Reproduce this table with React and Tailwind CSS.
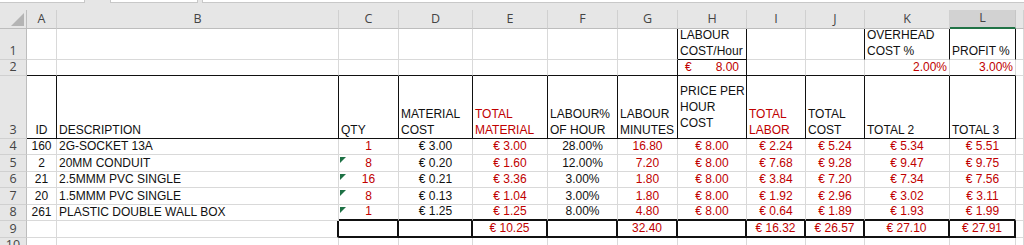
import React from "react";

const cellFont = "font-['Liberation_Sans',Arial,sans-serif] text-[12px]";

function box(v, sides = "trbl") {
  const b = { t: 0, r: 0, b: 0, l: 0 };
  for (const s of sides) b[s] = v;
  return b;
}

const N = 13; // A..M

function emptyRow() {
  return Array.from({ length: N }, () => ({ text: "", bd: { t: 0, r: 0, b: 0, l: 0 } }));
}

function buildRows() {
  const rows = [];
  const r1 = emptyRow();
  r1[7] = { text: "LABOUR\nCOST/Hour", al: "l", bd: box(1, "rl") };
  r1[10] = { text: "OVERHEAD\nCOST %", al: "l", bd: box(1, "rl") };
  r1[11] = { text: "PROFIT %", al: "l", bd: box(1, "rl") };
  rows.push(r1);
  const r2 = emptyRow();
  r2[7] = { acct: ["€", "8.00"], red: true, bd: box(1) };
  r2[10] = { text: "2.00%", al: "r", red: true, bd: box(0) };
  r2[11] = { text: "3.00%", al: "r", red: true, bd: box(0) };
  rows.push(r2);
  const h = [
    ["ID", "c"],
    ["DESCRIPTION", "l"],
    ["QTY", "l"],
    ["MATERIAL\nCOST", "l"],
    ["TOTAL\nMATERIAL", "l", true],
    ["LABOUR%\nOF HOUR", "l"],
    ["LABOUR\nMINUTES", "l"],
    ["PRICE PER\nHOUR\nCOST", "l", false, true],
    ["TOTAL\nLABOR", "l", true],
    ["TOTAL\nCOST", "l"],
    ["TOTAL 2", "l"],
    ["TOTAL 3", "l"],
  ];
  const r3 = emptyRow();
  h.forEach(([t, al, red, mid], i) => {
    r3[i] = { text: t, al, red, mid, bd: box(1) };
  });
  rows.push(r3);
  const data = [
    ["160", "2G-SOCKET 13A", "1", "€ 3.00", "€ 3.00", "28.00%", "16.80", "€ 8.00", "€ 2.24", "€ 5.24", "€ 5.34", "€ 5.51", false],
    ["2", "20MM CONDUIT", "8", "€ 0.20", "€ 1.60", "12.00%", "7.20", "€ 8.00", "€ 7.68", "€ 9.28", "€ 9.47", "€ 9.75", true],
    ["21", "2.5MMM PVC SINGLE", "16", "€ 0.21", "€ 3.36", "3.00%", "1.80", "€ 8.00", "€ 3.84", "€ 7.20", "€ 7.34", "€ 7.56", true],
    ["20", "1.5MMM PVC SINGLE", "8", "€ 0.13", "€ 1.04", "3.00%", "1.80", "€ 8.00", "€ 1.92", "€ 2.96", "€ 3.02", "€ 3.11", true],
    ["261", "PLASTIC DOUBLE WALL BOX", "1", "€ 1.25", "€ 1.25", "8.00%", "4.80", "€ 8.00", "€ 0.64", "€ 1.89", "€ 1.93", "€ 1.99", true],
  ];
  const redCols = [false, false, true, false, true, false, true, true, true, true, true, true];
  data.forEach((d) => {
    const r = emptyRow();
    for (let i = 0; i < 12; i++) {
      r[i] = {
        text: d[i],
        al: i === 1 ? "l" : "c",
        red: redCols[i],
        flag: i === 2 && d[12],
        bd: box(0),
      };
    }
    rows.push(r);
  });
  const r9 = emptyRow();
  const tot = { 4: "€ 10.25", 6: "32.40", 8: "€ 16.32", 9: "€ 26.57", 10: "€ 27.10", 11: "€ 27.91" };
  for (let i = 2; i < 12; i++) {
    r9[i] = { text: tot[i] || "", al: "c", red: true, bd: box(2) };
  }
  rows.push(r9);
  rows.push(emptyRow());
  return rows;
}

const rows = buildRows();

function rightCls(v) {
  if (v === 2) return "border-r-2 border-r-[#111]";
  if (v === 1) return "border-r border-r-[#111]";
  return "border-r border-r-[#d9d9d9]";
}
function bottomCls(v) {
  if (v === 2) return "border-b-2 border-b-[#111]";
  if (v === 1) return "border-b border-b-[#111]";
  return "border-b border-b-[#d9d9d9]";
}

function Cell({ cell, right, bottom }) {
  const color = cell.red ? "text-[#c00000]" : "text-[#111]";
  const al = cell.al === "c" ? "justify-center text-center" : cell.al === "r" ? "justify-end text-right pr-[2px]" : "justify-start text-left pl-[2px]";
  const va = cell.mid ? "items-center" : "items-end";
  return (
    <div className={`relative flex ${va} ${al} ${rightCls(right)} ${bottomCls(bottom)} bg-white overflow-hidden ${cellFont} ${color} leading-[16px] whitespace-pre-line`}>
      {cell.flag && (
        <svg className="absolute left-[1px] top-[2px]" width="6" height="6" viewBox="0 0 6 6">
          <polygon points="0,0 6,0 0,6" fill="#1e7145" />
        </svg>
      )}
      {cell.acct ? (
        <div className="flex w-full justify-between pl-[5px] pr-[7px]">
          <span>{cell.acct[0]}</span>
          <span>{cell.acct[1]}</span>
        </div>
      ) : (
        <span>{cell.text}</span>
      )}
    </div>
  );
}

const letters = ["A", "B", "C", "D", "E", "F", "G", "H", "I", "J", "K", "L", ""];

export default function App() {
  const hdrFont = "font-['Open_Sans','Noto_Sans',sans-serif] text-[12.5px] text-[#444]";
  return (
    <div className="h-[245px] w-[1024px] overflow-hidden bg-white">
      <div className="flex h-[10px] bg-[#e6e6e6]">
        <div className="h-[3px] w-[85px] border-b border-r border-[#c8c8c8] bg-white" />
        <div className="ml-[25px] h-[3px] w-[88px] border-b border-x border-[#c8c8c8] bg-white" />
        <div className="ml-[4px] h-[3px] flex-1 border-b border-l border-[#c8c8c8] bg-white" />
      </div>
      <div className="grid grid-cols-[27px_30px_282px_60px_74px_75px_70px_60px_69px_59px_59px_85px_66px_1fr] grid-rows-[19px_31px_16px_63px_16px_17px_16px_17px_16px_17px_16px]">
        <div className="flex items-end justify-end border-b border-r border-[#bdbdbd] bg-[#e6e6e6] pb-[2px] pr-[2px]">
          <svg width="13" height="13" viewBox="0 0 13 13">
            <polygon points="13,0 13,13 0,13" fill="#b4b4b4" />
          </svg>
        </div>
        {letters.map((l, i) =>
          l === "L" ? (
            <div key={i} className={`flex items-center justify-center border-b-2 border-b-[#217346] border-r border-r-[#c6c6c6] bg-[#d2d2d2] ${hdrFont} text-[#1e5f3a]`}>
              {l}
            </div>
          ) : (
            <div key={i} className={`flex items-center justify-center border-b border-b-[#bdbdbd] border-r border-r-[#d0d0d0] bg-[#e6e6e6] ${hdrFont}`}>
              {l}
            </div>
          )
        )}
        {rows.map((row, ri) => (
          <React.Fragment key={ri}>
            <div className={`flex items-end justify-center border-b border-b-[#d0d0d0] border-r border-r-[#bdbdbd] bg-[#e6e6e6] ${hdrFont} leading-[16px]`}>
              {ri + 1}
            </div>
            {row.map((cell, ci) => {
              const next = row[ci + 1];
              const below = rows[ri + 1] ? rows[ri + 1][ci] : null;
              const right = Math.max(cell.bd.r, next ? next.bd.l : 0);
              const bottom = Math.max(cell.bd.b, below ? below.bd.t : 0);
              return <Cell key={ci} cell={cell} right={right} bottom={bottom} />;
            })}
          </React.Fragment>
        ))}
      </div>
    </div>
  );
}
